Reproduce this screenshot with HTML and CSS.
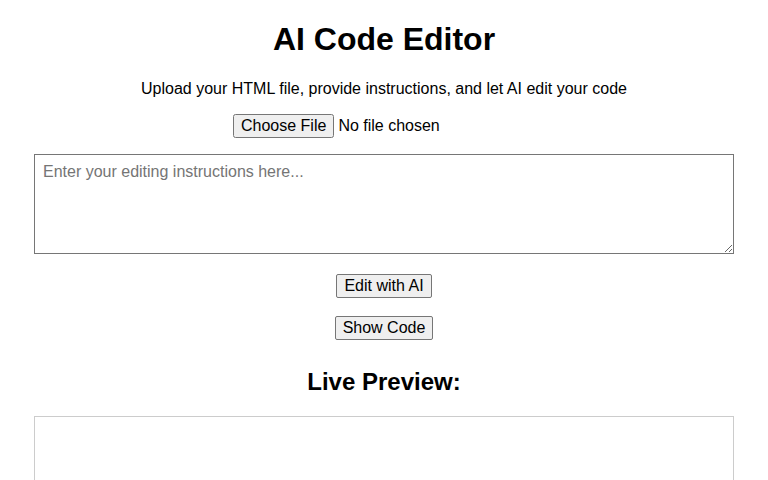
FILE: index.html
```html
<!DOCTYPE html>
<html lang="en">
<head>
<meta charset="utf-8">
<title>AI Code Editor</title>
<link rel="stylesheet" href="styles.css">
</head>
<body>
<div class="container">
  <h1 class="title">AI Code Editor</h1>
  <p class="subtitle">Upload your HTML file, provide instructions, and let AI edit your code</p>
  <div class="file-row"><input type="file" class="file-input" accept=".html"></div>
  <textarea class="instructions" placeholder="Enter your editing instructions here..."></textarea>
  <div class="actions">
    <button class="btn btn-edit">Edit with AI</button>
    <button class="btn btn-show">Show Code</button>
  </div>
  <h2 class="preview-title">Live Preview:</h2>
  <div class="preview"></div>
</div>
</body>
</html>
```

FILE: styles.css
```css
html, body {
  margin: 0;
  padding: 0;
  background: #ffffff;
}
body {
  font-family: "Liberation Sans", Arial, sans-serif;
  color: #000;
  text-align: center;
  padding: 0 8px;
  overflow: hidden;
}
.container {
  max-width: 700px;
  margin: 0 auto;
  display: flex;
  flex-direction: column;
  align-items: center;
}
.title {
  font-size: 32px;
  font-weight: bold;
  line-height: 36.8px;
  margin: 21.44px 0 21.44px;
}
.subtitle {
  font-size: 16px;
  line-height: 18.4px;
  margin: 0 0 16px;
}
.file-row {
  height: 24px;
  display: flex;
  justify-content: center;
  align-items: center;
  margin-bottom: 16px;
}
.file-input {
  font-family: "Liberation Sans", Arial, sans-serif;
  font-size: 16px;
  width: 302px;
}
.file-input::file-selector-button {
  font-family: "Liberation Sans", Arial, sans-serif;
  font-size: 16px;
}
.instructions {
  box-sizing: border-box;
  width: 100%;
  height: 100px;
  padding: 8px;
  border: 1px solid #767676;
  font-family: "Liberation Sans", Arial, sans-serif;
  font-size: 16px;
  margin: 0 0 20px;
}
.instructions::placeholder {
  color: #757575;
}
.actions {
  display: flex;
  flex-direction: column;
  align-items: center;
  gap: 18px;
}
.btn {
  box-sizing: border-box;
  height: 24px;
  padding: 1px 7px;
  font-family: "Liberation Sans", Arial, sans-serif;
  font-size: 16px;
  color: #000;
  background: #efefef;
  border: 1px solid #767676;
  border-radius: 2px;
}
.preview-title {
  font-size: 24px;
  font-weight: bold;
  line-height: 27.6px;
  margin: 28px 0 20px;
}
.preview {
  box-sizing: border-box;
  width: 100%;
  height: 400px;
  border: 1px solid #cccccc;
}
```
